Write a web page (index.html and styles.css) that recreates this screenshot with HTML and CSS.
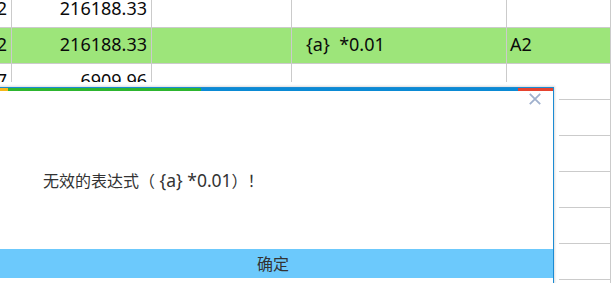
FILE: index.html
```html
<!DOCTYPE html>
<html lang="zh">
<head>
<meta charset="utf-8">
<title>无效的表达式</title>
<link rel="stylesheet" href="styles.css">
</head>
<body>
<div class="sheet">
  <div class="row">
    <div class="cell num">2</div>
    <div class="cell num">216188.33</div>
    <div class="cell"></div>
    <div class="cell"></div>
    <div class="cell"></div>
    <div class="cell last"></div>
  </div>
  <div class="row selected">
    <div class="cell num">2</div>
    <div class="cell num">216188.33</div>
    <div class="cell"></div>
    <div class="cell formula">{a}  *0.01</div>
    <div class="cell text">A2</div>
    <div class="cell last"></div>
  </div>
  <div class="row">
    <div class="cell num">7</div>
    <div class="cell num">6909.96</div>
    <div class="cell"></div>
    <div class="cell"></div>
    <div class="cell"></div>
    <div class="cell last"></div>
  </div>
  <div class="row"><div class="cell"></div><div class="cell"></div><div class="cell"></div><div class="cell"></div><div class="cell"></div><div class="cell last"></div></div>
  <div class="row"><div class="cell"></div><div class="cell"></div><div class="cell"></div><div class="cell"></div><div class="cell"></div><div class="cell last"></div></div>
  <div class="row"><div class="cell"></div><div class="cell"></div><div class="cell"></div><div class="cell"></div><div class="cell"></div><div class="cell last"></div></div>
  <div class="row"><div class="cell"></div><div class="cell"></div><div class="cell"></div><div class="cell"></div><div class="cell"></div><div class="cell last"></div></div>
  <div class="row"><div class="cell"></div><div class="cell"></div><div class="cell"></div><div class="cell"></div><div class="cell"></div><div class="cell last"></div></div>
  <div class="row"><div class="cell"></div><div class="cell"></div><div class="cell"></div><div class="cell"></div><div class="cell"></div><div class="cell last"></div></div>
</div>

<div class="dialog">
  <div class="stripe">
    <span class="s-orange"></span>
    <span class="s-green"></span>
    <span class="s-blue"></span>
    <span class="s-red"></span>
  </div>
  <div class="dialog-head">
    <svg class="close" width="12" height="12" viewBox="0 0 12 12" aria-label="关闭">
      <path d="M0.8 0.8 L11.2 11.2 M11.2 0.8 L0.8 11.2" stroke="#9fb0cd" stroke-width="1.8" fill="none"/>
    </svg>
  </div>
  <div class="dialog-body">
    <p class="message">无效的表达式（<span class="latin"> {a} *0.01</span>）！</p>
  </div>
  <div class="dialog-button">确定</div>
</div>
</body>
</html>
```
FILE: styles.css
```css
html, body {
  margin: 0;
  padding: 0;
}
body {
  width: 611px;
  height: 283px;
  overflow: hidden;
  background: #fff;
  position: relative;
  font-family: "Noto Sans", "Noto Sans CJK SC", sans-serif;
}

.sheet {
  margin-top: -8px;
}
.row {
  display: grid;
  grid-template-columns: 12px 140px 140px 215px 104px 1fr;
  height: 36px;
  box-sizing: border-box;
  border-bottom: 1px solid #cbcbcb;
}
.row.selected {
  background: #9de57a;
}
.cell {
  box-sizing: border-box;
  border-right: 1px solid #cbcbcb;
  font-size: 18px;
  line-height: 33px;
  color: #0a0a0a;
  white-space: pre;
  overflow: hidden;
}
.cell.last {
  border-right: none;
}
.cell.num {
  text-align: right;
  padding-right: 4px;
  overflow: visible;
  direction: rtl;
}
.cell.formula {
  padding-left: 14px;
}
.cell.text {
  padding-left: 3px;
}

.dialog {
  position: absolute;
  left: -8px;
  top: 87px;
  width: 562px;
  height: 220px;
  box-sizing: border-box;
  border: 1px solid #1b8bd3;
  background: #fff;
  box-shadow: 0 0 2px 1px rgba(0, 0, 0, 0.14), 0 0 0 5px #fff;
  display: flex;
  flex-direction: column;
}
.stripe {
  display: flex;
  height: 3px;
  flex: none;
}
.stripe span {
  display: block;
  height: 3px;
}
.s-orange { width: 15px; background: #f5b719; }
.s-green { width: 193px; background: #2db52f; }
.s-blue { width: 317px; background: #0b8ad4; }
.s-red { flex: 1; background: #e5432f; }

.dialog-head {
  height: 20px;
  flex: none;
  display: flex;
  justify-content: flex-end;
  align-items: flex-start;
  padding: 2px 12px 0 0;
  box-sizing: border-box;
}
.close {
  display: block;
}

.dialog-body {
  height: 138px;
  flex: none;
  box-sizing: border-box;
  padding: 59px 0 0 50px;
}
.message {
  margin: 0;
  font-family: "Noto Sans CJK SC", sans-serif;
  font-size: 16px;
  line-height: 20px;
  color: #333;
  white-space: pre;
}
.message .latin {
  font-family: "Noto Sans", sans-serif;
  font-size: 17.5px;
  line-height: 20px;
}

.dialog-button {
  height: 29px;
  flex: none;
  background: #6cc9fc;
  color: #333;
  font-family: "Noto Sans CJK SC", sans-serif;
  font-size: 16px;
  line-height: 29px;
  text-align: center;
}
```
